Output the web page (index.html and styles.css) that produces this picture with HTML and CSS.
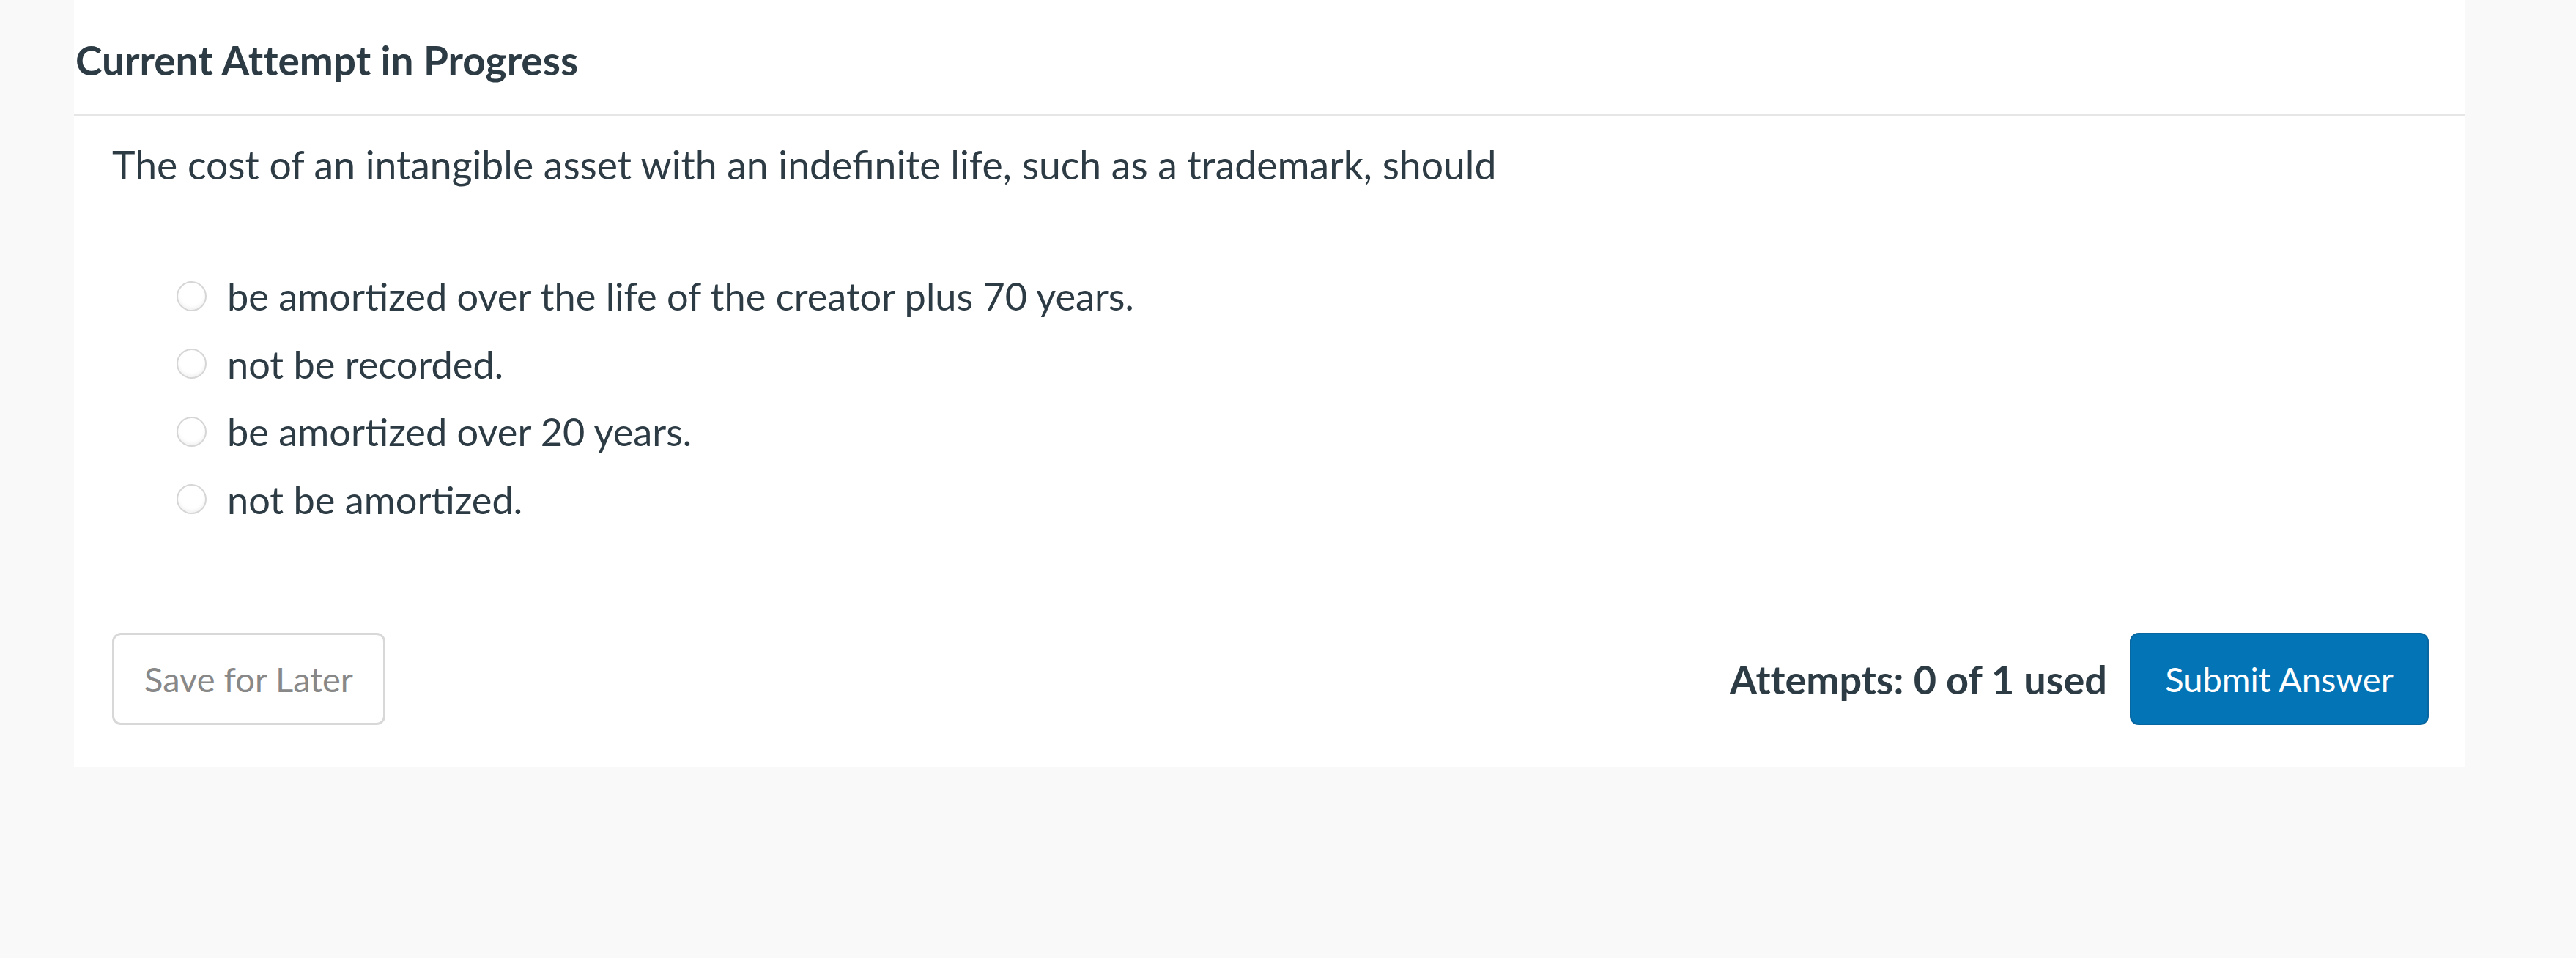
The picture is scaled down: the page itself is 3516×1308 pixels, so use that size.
FILE: index.html
```html
<!DOCTYPE html>
<html lang="en">
<head>
<meta charset="utf-8">
<title>Current Attempt in Progress</title>
<link rel="stylesheet" href="styles.css">
</head>
<body>
<div class="card">
  <div class="card-header">
    <h2 class="card-title">Current Attempt in Progress</h2>
  </div>
  <div class="card-body">
    <p class="question">The cost of an intangible asset with an indefinite life, such as a trademark, should</p>
    <ul class="options">
      <li class="option"><span class="radio"></span><span class="option-text">be amortized over the life of the creator plus 70 years.</span></li>
      <li class="option"><span class="radio"></span><span class="option-text">not be recorded.</span></li>
      <li class="option"><span class="radio"></span><span class="option-text">be amortized over 20 years.</span></li>
      <li class="option"><span class="radio"></span><span class="option-text">not be amortized.</span></li>
    </ul>
    <div class="actions">
      <button class="btn btn-secondary" type="button">Save for Later</button>
      <div class="actions-right">
        <span class="attempts">Attempts: 0 of 1 used</span>
        <button class="btn btn-primary" type="button">Submit Answer</button>
      </div>
    </div>
  </div>
</div>
</body>
</html>
```
FILE: styles.css
```css
html, body {
  margin: 0;
  padding: 0;
}
body {
  background: #f9f9f9;
  font-family: Lato, "Open Sans", "Liberation Sans", sans-serif;
  color: #2d3b45;
  width: 3516px;
  height: 1308px;
  overflow: hidden;
}
.card {
  margin-left: 101px;
  width: 3263px;
  background: #ffffff;
}
.card-header {
  box-sizing: border-box;
  height: 158px;
  padding-top: 49px;
  padding-left: 2px;
  border-bottom: 2px solid #e6e6e6;
}
.card-title {
  margin: 0;
  font-size: 55px;
  line-height: 66px;
  font-weight: 700;
  color: #2d3b45;
  font-variant-ligatures: no-common-ligatures;
}
.card-body {
  padding: 34px 49px 57px 52px;
}
.question {
  margin: 0 0 102px 0;
  font-size: 53.5px;
  line-height: 64px;
}
.options {
  list-style: none;
  margin: 0;
  padding: 0 0 0 88px;
}
.option {
  display: flex;
  align-items: center;
  height: 92.5px;
  font-size: 52.3px;
  line-height: 92px;
}
.radio {
  box-sizing: border-box;
  width: 41px;
  height: 41px;
  border-radius: 50%;
  border: 2px solid #d6d6d6;
  background: #ffffff;
  box-shadow: inset 0 -3px 4px rgba(0, 0, 0, 0.05);
  margin-right: 28px;
  flex: none;
}
.actions {
  margin-top: 136px;
  display: flex;
  justify-content: space-between;
  align-items: center;
}
.actions-right {
  display: flex;
  align-items: center;
  gap: 31px;
}
.attempts {
  font-size: 54px;
  font-weight: 700;
  color: #2d3b45;
  font-variant-ligatures: no-common-ligatures;
}
.btn {
  box-sizing: border-box;
  height: 126px;
  font-family: Lato, "Open Sans", "Liberation Sans", sans-serif;
  font-size: 47px;
  border-radius: 12px;
  cursor: pointer;
}
.btn-secondary {
  width: 373px;
  background: #ffffff;
  border: 3px solid #d8d8d8;
  color: #888888;
  padding: 0;
}
.btn-primary {
  width: 408px;
  background: #0374b5;
  border: 2px solid #0866a0;
  color: #ffffff;
  padding: 0;
}
```
